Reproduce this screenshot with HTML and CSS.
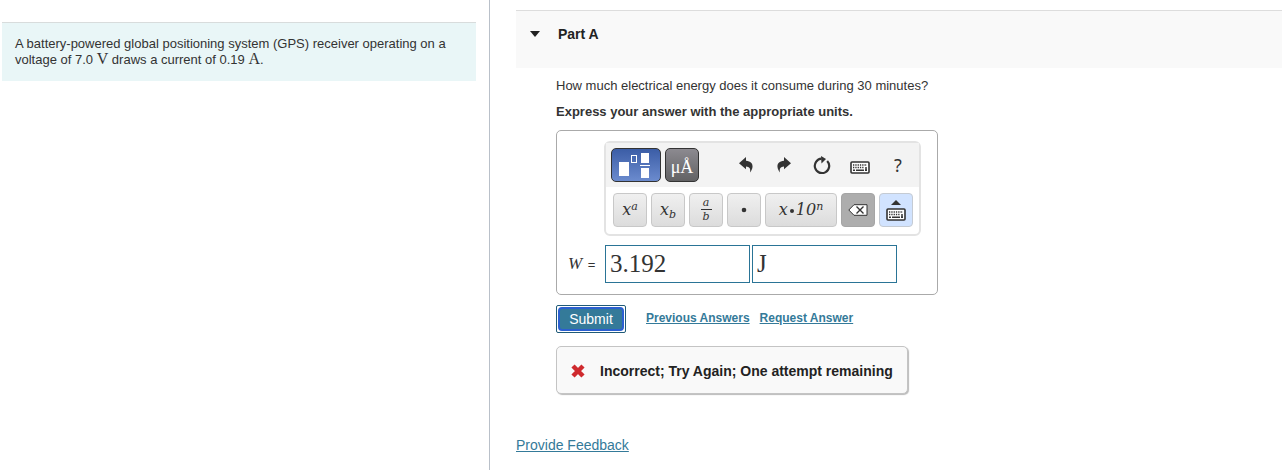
FILE: index.html
```
<!DOCTYPE html>
<html lang="en">

<head>
    <meta charset="UTF-8">
    <meta name="viewport" content="width=device-width, initial-scale=1">
    <link rel="stylesheet" href="styles.css">
    <title>Part A</title>
</head>

<body>
    <!-- shared keyboard icon -->
    <svg class="symbols" aria-hidden="true">
        <symbol id="keyboard" viewBox="0 0 20 13">
            <rect x="1" y="1" width="18" height="11" rx="1" fill="#fff" stroke="#333" stroke-width="1.6" />
            <path d="M3 4h14M3 6.5h11" stroke="#333" stroke-width="1.5" stroke-dasharray="1.3 1" />
            <path d="M3 9.2h2M6 9.2h8M15 9.2h2M16 6v2.5" stroke="#333" stroke-width="1.5" />
        </symbol>
    </svg>

    <div class="page">
        <aside class="intro">
            <p class="problem">A battery-powered global positioning system (GPS) receiver operating on a voltage of 7.0
                <span class="unit">V</span> draws a current of 0.19 <span class="unit">A</span>.</p>
        </aside>

        <main class="main">
            <header class="part-header">
                <button type="button" class="toggle" aria-label="Collapse Part A">
                    <svg width="10" height="6" viewBox="0 0 10 6"><path d="M0 0h10L5 6z" fill="#222" /></svg>
                </button>
                <h1>Part A</h1>
            </header>

            <form class="content">
                <p class="question">How much electrical energy does it consume during 30 minutes?</p>
                <p class="instructions">Express your answer with the appropriate units.</p>

                <div class="answer">
                    <div class="toolbar">
                        <div class="row tools">
                            <button type="button" class="tab tab-blue" aria-label="Templates">
                                <svg width="34" height="30" viewBox="0 0 34 30">
                                    <g fill="#fff">
                                        <rect y="12" width="10" height="14" />
                                        <rect x="22" y="3" width="8" height="10" />
                                        <rect x="21" y="15" width="10" height="1" />
                                        <rect x="22" y="18" width="8" height="10" />
                                    </g>
                                    <rect x="12.5" y="5.5" width="5" height="7" fill="none" stroke="#fff" />
                                </svg>
                            </button>
                            <button type="button" class="tab tab-gray">μÅ</button>
                            <div class="icons">
                                <button type="button" class="icon" aria-label="Undo">
                                    <svg width="14" height="16" viewBox="0 0 15 17">
                                        <path d="M0 6.500L7.500 0v4C12.500 4.500 14.800 7 14.500 10.500c-.2 2-1 4-2.600 6 .6-4.500-.6-6.300-4.400-6.500V13z" fill="#333" />
                                    </svg>
                                </button>
                                <button type="button" class="icon" aria-label="Redo">
                                    <svg width="14" height="16" viewBox="0 0 15 17">
                                        <path d="M15 6.500L7.500 0v4C2.500 4.500.2 7 .5 10.500c.2 2 1 4 2.600 6C2.500 12 3.700 10.200 7.500 10v3z" fill="#333" />
                                    </svg>
                                </button>
                                <button type="button" class="icon" aria-label="Reset">
                                    <svg width="18" height="18" viewBox="0 0 18 18">
                                        <path d="M14.200 4.900A7.200 7.200 0 1 1 8.500 2.700" fill="none" stroke="#333" stroke-width="2.200" />
                                        <path d="M8 0l5 3-4.500 4.500z" fill="#333" />
                                    </svg>
                                </button>
                                <button type="button" class="icon" aria-label="Keyboard shortcuts">
                                    <svg class="keys" width="20" height="13"><use href="#keyboard" /></svg>
                                </button>
                                <button type="button" class="icon help" aria-label="Help">?</button>
                            </div>
                        </div>
                        <div class="row keypad">
                            <button type="button" class="key">x<sup>a</sup></button>
                            <button type="button" class="key">x<sub>b</sub></button>
                            <button type="button" class="key fraction"><span class="top">a</span><span>b</span></button>
                            <button type="button" class="key" aria-label="Multiply">
                                <svg width="6" height="6"><circle cx="3" cy="3" r="2.300" fill="#333" /></svg>
                            </button>
                            <button type="button" class="key wide">x<span class="dot"></span>10<sup>n</sup></button>
                            <button type="button" class="key dark" aria-label="Delete">
                                <svg width="20" height="12" viewBox="0 0 20 12">
                                    <path d="M.8 6L6 .7h13v10.600H6z" fill="#fff" stroke="#333" />
                                    <path d="M8.500 2.500l7 7M15.500 2.500l-7 7" stroke="#333" stroke-width="1.400" />
                                </svg>
                            </button>
                            <button type="button" class="key light" aria-label="Show keypad">
                                <svg width="10" height="5" viewBox="0 0 10 5"><path d="M5 0l5 5H0z" fill="#333" /></svg>
                                <svg width="20" height="13"><use href="#keyboard" /></svg>
                            </button>
                        </div>
                    </div>

                    <div class="fields">
                        <label for="value"><i>W</i> =</label>
                        <input type="text" id="value" value="3.192">
                        <input type="text" id="units" value="J" aria-label="Units">
                    </div>
                </div>

                <div class="actions">
                    <button type="submit" class="submit"><span>Submit</span></button>
                    <a href="#">Previous Answers</a>
                    <a href="#">Request Answer</a>
                </div>

                <div class="result">
                    <svg width="14" height="14" viewBox="0 0 14 14">
                        <path d="M2 2l10 10M12 2L2 12" stroke="#cf2a2e" stroke-width="4.500" />
                    </svg>
                    <p>Incorrect; Try Again; One attempt remaining</p>
                </div>
            </form>

            <a href="#" class="feedback">Provide Feedback</a>
        </main>
    </div>
</body>

</html>
```
FILE: styles.css
```
* {
    margin: 0;
    padding: 0;
    box-sizing: border-box;
}

body {
    font-family: "Liberation Sans", Arial, sans-serif;
    font-size: 13px;
    line-height: 16px;
    color: #333;
    background-color: white;
}

button {
    font-family: inherit;
    cursor: pointer;
}

svg {
    display: block;
}

a {
    color: #347a99;
}

.symbols {
    display: none;
}

.page {
    display: flex;
    min-height: 100vh;
}

.intro {
    flex: 0 0 490px;
    padding: 22px 13px 0 2px;
    border-right: 1px solid #b9c0c9;
}

.problem {
    padding: 13px 24px 13px 13px;
    border-top: 1px solid #d8dcdc;
    background-color: #e9f6f7;
}

.unit {
    font-family: "Liberation Serif", "Times New Roman", serif;
    font-size: 16px;
    line-height: 14px;
}

.main {
    flex: 1;
    padding: 10px 0 0 26px;
}

.part-header {
    display: flex;
    align-items: center;
    height: 58px;
    padding: 0 14px 12px;
    border-top: 1px solid #ddd;
    background-color: #f9f9f9;
}

.part-header h1 {
    margin-left: 18px;
    font-size: 14px;
    color: #222;
}

.toggle {
    border: 0;
    background: none;
}

.content {
    padding: 10px 40px 0;
}

.instructions {
    margin-top: 10px;
    font-weight: bold;
}

.answer {
    max-width: 382px;
    margin-top: 10px;
    padding: 10px 16px 11px 11px;
    border: 1px solid #aaa;
    border-radius: 5px;
}

.toolbar {
    margin-left: 36px;
    border: 2px solid #e3e3e3;
    border-radius: 6px;
}

.row {
    display: flex;
    gap: 4px;
}

.tools {
    height: 44px;
    padding: 5px 2px 0 5px;
    background-color: #f3f3f3;
}

.tab {
    display: flex;
    align-items: center;
    justify-content: center;
    width: 34px;
    height: 34px;
    border: 1px solid #333;
    border-radius: 5px;
}

.tab-blue {
    width: 50px;
    background: linear-gradient(#3b5da6, #6b8bce);
}

.tab-gray {
    padding-top: 4px;
    background: linear-gradient(#8c8a90, #626264);
    color: white;
    font-family: "Liberation Serif", "Times New Roman", serif;
    font-size: 18px;
}

.icons {
    display: flex;
    flex: 1;
    justify-content: flex-end;
}

.icon {
    display: flex;
    align-items: center;
    justify-content: center;
    width: 38px;
    height: 34px;
    border: 0;
    background: none;
}

.keys {
    margin-top: 4px;
}

.help {
    color: #333;
    font-family: "Noto Sans", sans-serif;
    font-size: 18px;
}

.keypad {
    padding: 6px 6px 7px 7px;
}

.key {
    display: flex;
    align-items: center;
    justify-content: center;
    width: 34px;
    height: 34px;
    border: 1px solid #c8c8c8;
    border-radius: 4px;
    background: linear-gradient(#f0f0f0, #dcdcdc);
    color: #333;
    font-family: "DejaVu Serif", serif;
    font-size: 16px;
    font-style: italic;
    line-height: 16px;
}

.key sup,
.key sub {
    font-size: 11px;
    line-height: 12px;
}

.key sup {
    margin-bottom: 6px;
}

.key sub {
    margin-top: 10px;
}

.fraction {
    flex-direction: column;
    gap: 1px;
    font-size: 11px;
    line-height: 12px;
}

.fraction .top {
    width: 11px;
    border-bottom: 1px solid #333;
}

.wide {
    width: 72px;
}

.dot {
    width: 4px;
    height: 4px;
    margin: 2px 2px 0;
    border-radius: 50%;
    background-color: #333;
}

.dark {
    border-color: #a5a5a5;
    background: #adadad;
}

.light {
    flex-direction: column;
    gap: 3px;
    border-color: #c5cbd3;
    background: #d1e3ff;
}

.fields {
    display: flex;
    align-items: center;
    gap: 2px;
    margin-top: 9px;
}

.fields label {
    width: 35px;
}

.fields i {
    margin-right: 2px;
    font-family: "Liberation Serif", "Times New Roman", serif;
    font-size: 17px;
}

.fields input {
    width: 145px;
    height: 38px;
    padding: 0 4px;
    border: 1px solid #2a7496;
    color: #333;
    font-family: "Liberation Serif", "Times New Roman", serif;
    font-size: 25px;
}

.actions {
    display: flex;
    align-items: center;
    gap: 10px;
    margin-top: 10px;
    font-size: 12px;
    font-weight: bold;
}

.submit {
    width: 70px;
    height: 28px;
    margin-right: 10px;
    padding: 1px;
    border: 1px solid #1f5a78;
    border-radius: 2px;
    background-color: white;
    color: white;
    font-size: 14px;
}

.submit span {
    display: block;
    height: 24px;
    border: 2px solid #2b5fd0;
    border-radius: 4px;
    background-color: #347a99;
    line-height: 20px;
}

.actions a {
    padding-bottom: 2px;
}

.result {
    display: flex;
    align-items: center;
    gap: 15px;
    max-width: 352px;
    min-height: 48px;
    margin-top: 13px;
    padding: 2px 14px 0;
    border: 1px solid #c4c4c4;
    border-radius: 5px;
    box-shadow: 1px 1px 1px #bbb;
    background-color: #f9f9f9;
    color: #222;
    font-size: 14px;
    font-weight: bold;
}

.feedback {
    display: inline-block;
    margin-top: 43px;
    font-size: 14px;
}
```
